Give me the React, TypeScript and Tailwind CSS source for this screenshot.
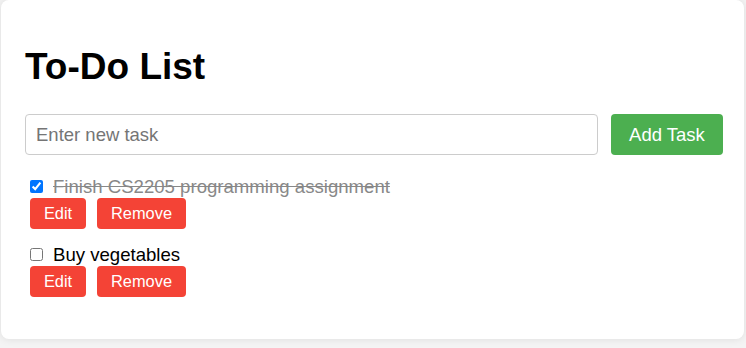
import React from "react";

export default function App() {
  const tasks = [
    { text: "Finish CS2205 programming assignment", done: true },
    { text: "Buy vegetables", done: false },
  ];
  return (
    <div
      className="w-[746px] h-[348px] bg-[#f4f4f4] overflow-hidden"
      style={{ fontFamily: '"Liberation Sans", Arial, sans-serif' }}
    >
      <div className="ml-[1px] w-[743px] h-[339px] bg-white rounded-lg shadow-[0_0_8px_rgba(0,0,0,0.1)] pl-[24px] pr-[21px] pt-[46px]">
        <h1 className="text-[37px] font-bold leading-[41px] text-black m-0">To-Do List</h1>
        <div className="flex gap-[13px] mt-[27px]">
          <input
            type="text"
            placeholder="Enter new task"
            className="flex-1 h-[41px] border border-[#ccc] rounded-[4px] px-[10px] text-[18.5px] text-black placeholder:text-[#757575] outline-none"
          />
          <button className="w-[112px] h-[41px] bg-[#4CAF50] text-white text-[18.5px] rounded-[4px]">
            Add Task
          </button>
        </div>
        <div className="mt-[21px] flex flex-col gap-[15px]">
          {tasks.map((t, i) => (
            <div key={i} className="pl-[5px]">
              <div className="flex items-center h-[21px]">
                <input
                  type="checkbox"
                  defaultChecked={t.done}
                  className="w-[13px] h-[13px] m-0 mr-[10px]"
                />
                <span
                  className={
                    "text-[18.6px] leading-[21px] " +
                    (t.done ? "line-through text-[#888]" : "text-black")
                  }
                >
                  {t.text}
                </span>
              </div>
              <div className="flex gap-[11px] mt-[1px]">
                <button className="h-[31px] w-[56px] bg-[#f44336] text-white text-[16.4px] rounded-[4px]">
                  Edit
                </button>
                <button className="h-[31px] w-[89px] bg-[#f44336] text-white text-[16.4px] rounded-[4px]">
                  Remove
                </button>
              </div>
            </div>
          ))}
        </div>
      </div>
    </div>
  );
}
